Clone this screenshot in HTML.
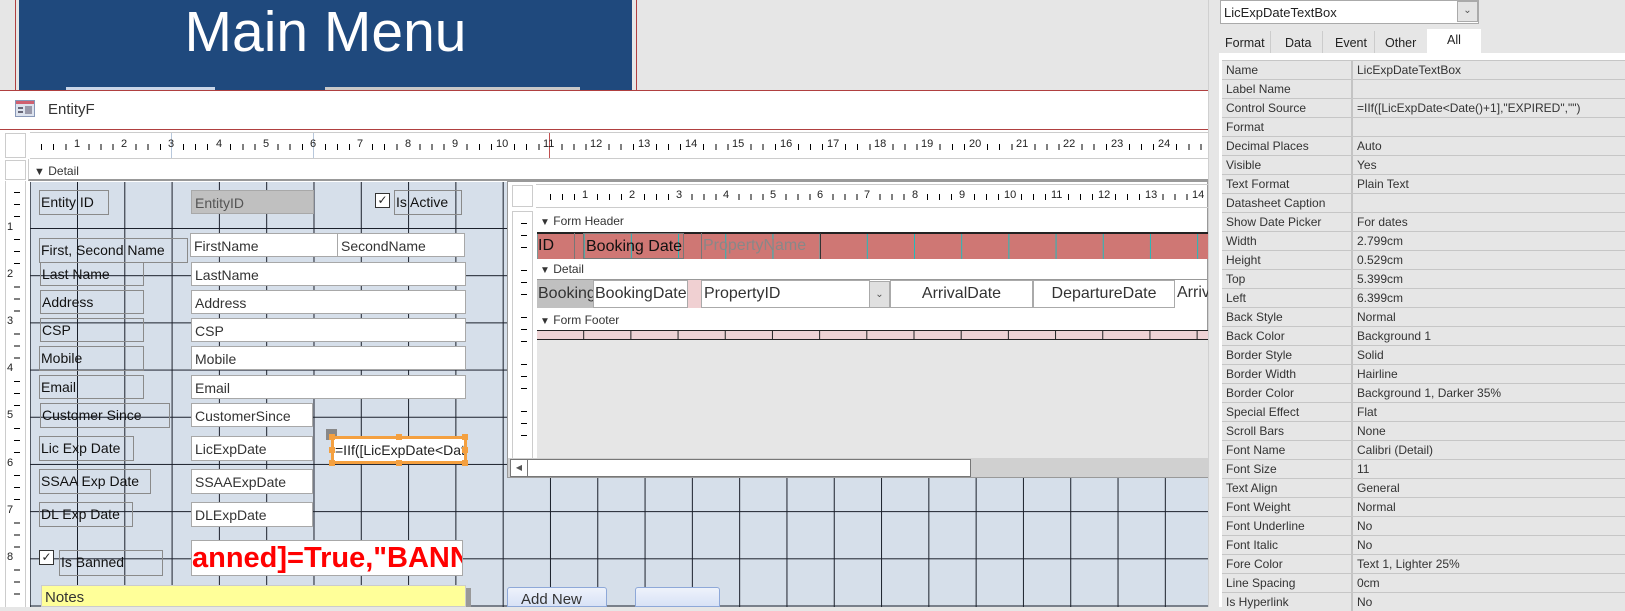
<!DOCTYPE html>
<html><head><meta charset="utf-8"><style>
*{margin:0;padding:0;box-sizing:border-box}
body{width:1625px;height:607px;overflow:hidden;background:#e6e6e6;position:relative;font-family:"Liberation Sans",sans-serif;color:#222}
.a{position:absolute}
.lbl{position:absolute;border:1px solid #8a8a8a;font-size:14px;padding:3px 0 0 1px;white-space:nowrap;overflow:hidden;color:#111}
.tb{position:absolute;background:#fff;border:1px solid #a8a8a8;font-size:14px;padding:4px 0 0 3px;white-space:nowrap;overflow:hidden;color:#333}
.rn{position:absolute;font-size:11px;color:#222}
.bar{position:absolute;background:#fff;font-size:12px;color:#333}
.prow{position:absolute;left:1222px;width:403px;height:18px;background:#e6e6e6;font-family:"Liberation Sans",sans-serif;font-size:12px;color:#333}
.prow span{position:absolute;top:2px;white-space:nowrap}
.prow .k{left:4px}
.prow .v{left:135px}
.prow:before{content:"";position:absolute;left:129px;top:0;width:2px;height:18px;background:#c4c4c4}
</style></head><body>
<div class="a" style="left:15px;top:0;width:1px;height:91px;background:#b04040"></div>
<div class="a" style="left:19px;top:0;width:613px;height:90px;background:#1f497d"></div>
<div class="a" style="left:636px;top:0;width:1px;height:91px;background:#b04040"></div>
<div class="a" style="left:19px;top:1px;width:613px;text-align:center;color:#fff;font-size:57px;line-height:62px">Main Menu</div>
<div class="a" style="left:66px;top:87px;width:149px;height:3px;background:#c9d6e8"></div>
<div class="a" style="left:325px;top:87px;width:255px;height:3px;background:#c8c8c8"></div>
<div class="a" style="left:0;top:90px;width:1208px;height:517px;background:#fff"></div>
<div class="a" style="left:0;top:90px;width:1208px;height:1px;background:#b04040"></div>
<div class="a" style="left:0;top:129px;width:1208px;height:1px;background:#b04040"></div>
<div class="a" style="left:15px;top:100px;width:20px;height:17px;border:1px solid #8898b8;background:#dde3ee"><div class="a" style="left:0;top:0;width:18px;height:3px;background:#d06070"></div><div class="a" style="left:2px;top:6px;width:5px;height:2px;background:#667"></div><div class="a" style="left:9px;top:5px;width:7px;height:4px;background:#99a;"></div><div class="a" style="left:2px;top:10px;width:5px;height:2px;background:#667"></div><div class="a" style="left:9px;top:9px;width:7px;height:4px;background:#99a"></div></div>
<div class="a" style="left:48px;top:101px;font-size:15px;color:#333">EntityF</div>
<div class="a" style="left:0;top:130px;width:1208px;height:477px;background:#fff"></div>
<div class="a" style="left:5px;top:133px;width:21px;height:25px;border:1px solid #ccc"></div>
<div class="a" style="left:30px;top:132px;width:1178px;height:27px;border-top:1px solid #ccc;border-bottom:1px solid #ccc;background:repeating-linear-gradient(90deg,transparent 0,transparent 11px,#000 11px,#000 12px,transparent 12px,transparent 23.15px,#000 23.15px,#000 24.15px,transparent 24.15px,transparent 35.3px,#000 35.3px,#000 36.3px,transparent 36.3px,transparent 47.3px) 0 11px/100% 6px no-repeat"></div>
<div class="a" style="left:171px;top:133px;width:1px;height:25px;background:#b8c8dc"></div>
<div class="a" style="left:313px;top:133px;width:1px;height:25px;background:#b8c8dc"></div>
<div class="a" style="left:549px;top:133px;width:1px;height:25px;background:#c05050"></div>
<div class="rn" style="left:74px;top:138px">1</div><div class="rn" style="left:121px;top:138px">2</div><div class="rn" style="left:168px;top:138px">3</div><div class="rn" style="left:216px;top:138px">4</div><div class="rn" style="left:263px;top:138px">5</div><div class="rn" style="left:310px;top:138px">6</div><div class="rn" style="left:357px;top:138px">7</div><div class="rn" style="left:405px;top:138px">8</div><div class="rn" style="left:452px;top:138px">9</div><div class="rn" style="left:496px;top:138px">10</div><div class="rn" style="left:543px;top:138px">11</div><div class="rn" style="left:590px;top:138px">12</div><div class="rn" style="left:638px;top:138px">13</div><div class="rn" style="left:685px;top:138px">14</div><div class="rn" style="left:732px;top:138px">15</div><div class="rn" style="left:780px;top:138px">16</div><div class="rn" style="left:827px;top:138px">17</div><div class="rn" style="left:874px;top:138px">18</div><div class="rn" style="left:921px;top:138px">19</div><div class="rn" style="left:969px;top:138px">20</div><div class="rn" style="left:1016px;top:138px">21</div><div class="rn" style="left:1063px;top:138px">22</div><div class="rn" style="left:1111px;top:138px">23</div><div class="rn" style="left:1158px;top:138px">24</div>
<div class="a" style="left:5px;top:160px;width:21px;height:20px;border:1px solid #ccc"></div>
<div class="a" style="left:5px;top:181px;width:21px;height:426px;border-right:1px solid #ccc;border-left:1px solid #ccc;background:repeating-linear-gradient(180deg,transparent 0,transparent 11px,#000 11px,#000 12px,transparent 12px,transparent 23px,#000 23px,#000 24px,transparent 24px,transparent 35px,#000 35px,#000 36px,transparent 36px,transparent 47.2px) 8px 0/6px 100% no-repeat"></div>
<div class="rn" style="left:7px;top:221px;background:#fff">1</div><div class="rn" style="left:7px;top:268px;background:#fff">2</div><div class="rn" style="left:7px;top:315px;background:#fff">3</div><div class="rn" style="left:7px;top:362px;background:#fff">4</div><div class="rn" style="left:7px;top:409px;background:#fff">5</div><div class="rn" style="left:7px;top:457px;background:#fff">6</div><div class="rn" style="left:7px;top:504px;background:#fff">7</div><div class="rn" style="left:7px;top:551px;background:#fff">8</div>
<div class="a" style="left:28px;top:159px;width:1180px;height:22px;border-left:1px solid #ccc;border-bottom:2px solid #999"></div>
<div class="bar" style="left:34px;top:164px;"><span style="font-size:11px">&#9660;</span> Detail</div>
<div class="a" style="left:30px;top:182px;width:1178px;height:425px;background-color:#d6dfea;background-image:linear-gradient(90deg,#1a1f2a 1px,transparent 1px),linear-gradient(180deg,#1a1f2a 1px,transparent 1px);background-size:47.3px 47.2px;background-position:-0.3px -1.2px"></div>
<div class="lbl" style="left:39px;top:190px;width:70px;height:25px">Entity ID</div>
<div class="tb" style="left:191px;top:190px;width:123px;height:24px;background:#c0c0c0;color:#555">EntityID</div>
<div class="a" style="left:375px;top:193px;width:15px;height:15px;border:1px solid #333;background:#fff;font-size:12px;line-height:13px;text-align:center">&#10003;</div>
<div class="lbl" style="left:394px;top:190px;width:68px;height:25px">Is Active</div>
<div class="lbl" style="left:39px;top:238px;width:149px;height:25px">First, Second Name</div>
<div class="tb" style="left:190px;top:233px;width:148px;height:24px">FirstName</div>
<div class="tb" style="left:337px;top:233px;width:128px;height:24px">SecondName</div>
<div class="lbl" style="left:40px;top:262px;width:104px;height:24px">Last Name</div>
<div class="tb" style="left:191px;top:262px;width:275px;height:24px">LastName</div>
<div class="lbl" style="left:40px;top:290px;width:104px;height:24px">Address</div>
<div class="tb" style="left:191px;top:290px;width:275px;height:24px">Address</div>
<div class="lbl" style="left:40px;top:318px;width:104px;height:24px">CSP</div>
<div class="tb" style="left:191px;top:318px;width:275px;height:24px">CSP</div>
<div class="lbl" style="left:39px;top:346px;width:105px;height:25px">Mobile</div>
<div class="tb" style="left:191px;top:346px;width:275px;height:24px">Mobile</div>
<div class="lbl" style="left:39px;top:375px;width:105px;height:24px">Email</div>
<div class="tb" style="left:191px;top:375px;width:275px;height:24px">Email</div>
<div class="lbl" style="left:40px;top:403px;width:130px;height:25px">Customer Since</div>
<div class="tb" style="left:191px;top:403px;width:122px;height:24px">CustomerSince</div>
<div class="lbl" style="left:39px;top:436px;width:95px;height:25px">Lic Exp Date</div>
<div class="tb" style="left:191px;top:436px;width:122px;height:25px">LicExpDate</div>
<div class="a" style="left:326px;top:429px;width:11px;height:11px;background:#888"></div>
<div class="tb" style="left:331px;top:436px;width:136px;height:28px;border:3px solid #f4a040;padding:3px 0 0 1px;color:#222">=IIf([LicExpDate&lt;Date</div>
<div class="a" style="left:329px;top:434px;width:6px;height:6px;background:#f4a040"></div><div class="a" style="left:396px;top:434px;width:6px;height:6px;background:#f4a040"></div><div class="a" style="left:462px;top:434px;width:6px;height:6px;background:#f4a040"></div><div class="a" style="left:329px;top:447px;width:6px;height:6px;background:#f4a040"></div><div class="a" style="left:462px;top:447px;width:6px;height:6px;background:#f4a040"></div><div class="a" style="left:329px;top:460px;width:6px;height:6px;background:#f4a040"></div><div class="a" style="left:396px;top:460px;width:6px;height:6px;background:#f4a040"></div><div class="a" style="left:462px;top:460px;width:6px;height:6px;background:#f4a040"></div>
<div class="lbl" style="left:39px;top:469px;width:112px;height:25px">SSAA Exp Date</div>
<div class="tb" style="left:191px;top:469px;width:122px;height:25px">SSAAExpDate</div>
<div class="lbl" style="left:39px;top:502px;width:94px;height:25px">DL Exp Date</div>
<div class="tb" style="left:191px;top:502px;width:122px;height:25px">DLExpDate</div>
<div class="a" style="left:39px;top:550px;width:15px;height:15px;border:1px solid #333;background:#fff;font-size:12px;line-height:13px;text-align:center">&#10003;</div>
<div class="lbl" style="left:59px;top:550px;width:104px;height:26px">Is Banned</div>
<div class="tb" style="left:191px;top:540px;width:272px;height:36px;color:#f00;font-weight:bold;font-size:29px;padding:1px 0 0 0"><span>anned]=True,"BANNED"</span></div>
<div class="a" style="left:41px;top:585px;width:425px;height:22px;background:#ffff99;border:1px solid #ccc;font-size:15px;padding:3px 0 0 3px;color:#333">Notes</div>
<div class="a" style="left:466px;top:588px;width:5px;height:19px;background:#999"></div>
<div class="a" style="left:507px;top:587px;width:100px;height:20px;border:1px solid #8ea8d8;border-radius:3px 3px 0 0;background:linear-gradient(#eef2fb,#d8e2f6);font-size:15px;padding:3px 0 0 13px;color:#333">Add New</div>
<div class="a" style="left:635px;top:587px;width:85px;height:20px;border:1px solid #8ea8d8;border-radius:3px 3px 0 0;background:linear-gradient(#eef2fb,#d8e2f6)"></div>
<div class="a" style="left:507px;top:181px;width:701px;height:297px;background:#fff;border:1px solid #999"></div>
<div class="a" style="left:512px;top:185px;width:21px;height:22px;border:1px solid #ccc"></div>
<div class="a" style="left:536px;top:184px;width:672px;height:24px;border-top:1px solid #ccc;border-bottom:1px solid #ccc;background:repeating-linear-gradient(90deg,transparent 0,transparent 11px,#000 11px,#000 12px,transparent 12px,transparent 23px,#000 23px,#000 24px,transparent 24px,transparent 35px,#000 35px,#000 36px,transparent 36px,transparent 47.1px) 3px 9px/100% 6px no-repeat"></div>
<div class="rn" style="left:582px;top:189px;background:#fff">1</div><div class="rn" style="left:629px;top:189px;background:#fff">2</div><div class="rn" style="left:676px;top:189px;background:#fff">3</div><div class="rn" style="left:723px;top:189px;background:#fff">4</div><div class="rn" style="left:770px;top:189px;background:#fff">5</div><div class="rn" style="left:817px;top:189px;background:#fff">6</div><div class="rn" style="left:864px;top:189px;background:#fff">7</div><div class="rn" style="left:912px;top:189px;background:#fff">8</div><div class="rn" style="left:959px;top:189px;background:#fff">9</div><div class="rn" style="left:1004px;top:189px;background:#fff">10</div><div class="rn" style="left:1051px;top:189px;background:#fff">11</div><div class="rn" style="left:1098px;top:189px;background:#fff">12</div><div class="rn" style="left:1145px;top:189px;background:#fff">13</div><div class="rn" style="left:1192px;top:189px;background:#fff">14</div>
<div class="a" style="left:512px;top:211px;width:21px;height:255px;border:1px solid #ccc;background:repeating-linear-gradient(180deg,transparent 0,transparent 11px,#000 11px,#000 12px,transparent 12px,transparent 23px,#000 23px,#000 24px,transparent 24px,transparent 35px,#000 35px,#000 36px,transparent 36px,transparent 47px) 8px 0/6px 100% no-repeat"></div>
<div class="bar" style="left:540px;top:214px"><span style="font-size:10px">&#9660;</span> Form Header</div>
<div class="a" style="left:537px;top:232px;width:671px;height:27px;background:#cf7774;border-top:2px solid #222;background-image:linear-gradient(90deg,#2bb 1px,transparent 1px);background-size:47.2px 100%;background-position:-0.5px 0"></div>
<div class="a" style="left:537px;top:233px;width:38px;height:26px;border-right:1px solid #777;font-size:16px;padding:4px 0 0 1px;color:#111">ID</div>
<div class="a" style="left:583px;top:233px;width:101px;height:26px;border:1px solid #777;font-size:16px;padding:4px 0 0 2px;color:#111;white-space:nowrap">Booking Date</div>
<div class="a" style="left:701px;top:233px;width:120px;height:26px;border-left:1px solid #777;border-right:1px solid #333;font-size:16px;padding:4px 0 0 1px;color:#888;white-space:nowrap">PropertyName</div>
<div class="bar" style="left:540px;top:262px"><span style="font-size:10px">&#9660;</span> Detail</div>
<div class="a" style="left:537px;top:279px;width:671px;height:1px;background:#999"></div>
<div class="a" style="left:537px;top:280px;width:56px;height:28px;background:#c0c0c0;font-size:16px;padding:5px 0 0 1px;overflow:hidden;white-space:nowrap;color:#333">Booking</div>
<div class="a" style="left:593px;top:280px;width:95px;height:28px;border:1px solid #aaa;font-size:16px;padding:4px 0 0 1px;overflow:hidden;white-space:nowrap;color:#333">BookingDate</div>
<div class="a" style="left:688px;top:280px;width:13px;height:28px;background:#f0d0d2"></div>
<div class="a" style="left:701px;top:280px;width:169px;height:28px;border:1px solid #aaa;font-size:16px;padding:4px 0 0 2px;color:#333">PropertyID</div>
<div class="a" style="left:869px;top:281px;width:21px;height:27px;background:#e0e0e0;border:1px solid #aaa;font-size:10px;text-align:center;line-height:25px;color:#555">&#8964;</div>
<div class="a" style="left:890px;top:280px;width:143px;height:28px;border:1px solid #aaa;font-size:16px;padding:4px 0 0 0;text-align:center;color:#333">ArrivalDate</div>
<div class="a" style="left:1033px;top:280px;width:142px;height:28px;border:1px solid #aaa;font-size:16px;padding:4px 0 0 0;text-align:center;color:#333">DepartureDate</div>
<div class="a" style="left:1175px;top:280px;width:33px;height:28px;font-size:16px;padding:4px 0 0 2px;overflow:hidden;white-space:nowrap;color:#333">Arrival</div>
<div class="bar" style="left:540px;top:313px"><span style="font-size:10px">&#9660;</span> Form Footer</div>
<div class="a" style="left:537px;top:330px;width:671px;height:10px;background:#eed3d5;border-top:1px solid #222;border-bottom:1px solid #222;background-image:linear-gradient(90deg,#222 1px,transparent 1px);background-size:47.2px 100%;background-position:-1px 0"></div>
<div class="a" style="left:537px;top:340px;width:671px;height:118px;background:#e6e6e6"></div>
<div class="a" style="left:508px;top:458px;width:700px;height:19px;background:#d0d0d0"></div>
<div class="a" style="left:510px;top:459px;width:461px;height:18px;background:#fff;border:1px solid #777"></div>
<div class="a" style="left:511px;top:460px;width:17px;height:16px;border-right:1px solid #777;font-size:8px;color:#555;text-align:center;line-height:16px">&#9664;</div>
<div class="a" style="left:1208px;top:0;width:417px;height:607px;background:#e6e6e6;border-left:1px solid #d0d0d0"></div>
<div class="a" style="left:1220px;top:0;width:259px;height:24px;background:#fff;border:1px solid #aaa;font-size:13px;padding:4px 0 0 3px">LicExpDateTextBox</div>
<div class="a" style="left:1457px;top:1px;width:21px;height:21px;background:#e4e4e4;border:1px solid #aaa;font-size:10px;text-align:center;line-height:18px;color:#555">&#8964;</div>
<div class="a" style="left:1221px;top:31px;width:50px;height:22px;background:#e6e6e6;border-right:1px solid #ccc;font-size:12.5px;padding:5px 0 0 4px">Format</div>
<div class="a" style="left:1272px;top:31px;width:51px;height:22px;border-right:1px solid #ccc;font-size:12.5px;padding:5px 0 0 13px">Data</div>
<div class="a" style="left:1324px;top:31px;width:51px;height:22px;border-right:1px solid #ccc;font-size:12.5px;padding:5px 0 0 11px">Event</div>
<div class="a" style="left:1376px;top:31px;width:51px;height:22px;font-size:12.5px;padding:5px 0 0 9px">Other</div>
<div class="a" style="left:1427px;top:29px;width:54px;height:25px;background:#fff;font-size:12.5px;padding:4px 0 0 20px">All</div>
<div class="a" style="left:1219px;top:53px;width:406px;height:554px;background:#fff"></div>
<div class="a" style="left:1222px;top:60px;width:403px;height:547px;background:#c6c6c6"></div>
<div class="prow" style="top:61px"><span class="k">Name</span><span class="v">LicExpDateTextBox</span></div>
<div class="prow" style="top:80px"><span class="k">Label Name</span><span class="v"></span></div>
<div class="prow" style="top:99px"><span class="k">Control Source</span><span class="v">=IIf([LicExpDate&lt;Date()+1],"EXPIRED","")</span></div>
<div class="prow" style="top:118px"><span class="k">Format</span><span class="v"></span></div>
<div class="prow" style="top:137px"><span class="k">Decimal Places</span><span class="v">Auto</span></div>
<div class="prow" style="top:156px"><span class="k">Visible</span><span class="v">Yes</span></div>
<div class="prow" style="top:175px"><span class="k">Text Format</span><span class="v">Plain Text</span></div>
<div class="prow" style="top:194px"><span class="k">Datasheet Caption</span><span class="v"></span></div>
<div class="prow" style="top:213px"><span class="k">Show Date Picker</span><span class="v">For dates</span></div>
<div class="prow" style="top:232px"><span class="k">Width</span><span class="v">2.799cm</span></div>
<div class="prow" style="top:251px"><span class="k">Height</span><span class="v">0.529cm</span></div>
<div class="prow" style="top:270px"><span class="k">Top</span><span class="v">5.399cm</span></div>
<div class="prow" style="top:289px"><span class="k">Left</span><span class="v">6.399cm</span></div>
<div class="prow" style="top:308px"><span class="k">Back Style</span><span class="v">Normal</span></div>
<div class="prow" style="top:327px"><span class="k">Back Color</span><span class="v">Background 1</span></div>
<div class="prow" style="top:346px"><span class="k">Border Style</span><span class="v">Solid</span></div>
<div class="prow" style="top:365px"><span class="k">Border Width</span><span class="v">Hairline</span></div>
<div class="prow" style="top:384px"><span class="k">Border Color</span><span class="v">Background 1, Darker 35%</span></div>
<div class="prow" style="top:403px"><span class="k">Special Effect</span><span class="v">Flat</span></div>
<div class="prow" style="top:422px"><span class="k">Scroll Bars</span><span class="v">None</span></div>
<div class="prow" style="top:441px"><span class="k">Font Name</span><span class="v">Calibri (Detail)</span></div>
<div class="prow" style="top:460px"><span class="k">Font Size</span><span class="v">11</span></div>
<div class="prow" style="top:479px"><span class="k">Text Align</span><span class="v">General</span></div>
<div class="prow" style="top:498px"><span class="k">Font Weight</span><span class="v">Normal</span></div>
<div class="prow" style="top:517px"><span class="k">Font Underline</span><span class="v">No</span></div>
<div class="prow" style="top:536px"><span class="k">Font Italic</span><span class="v">No</span></div>
<div class="prow" style="top:555px"><span class="k">Fore Color</span><span class="v">Text 1, Lighter 25%</span></div>
<div class="prow" style="top:574px"><span class="k">Line Spacing</span><span class="v">0cm</span></div>
<div class="prow" style="top:593px"><span class="k">Is Hyperlink</span><span class="v">No</span></div>
</body></html>
